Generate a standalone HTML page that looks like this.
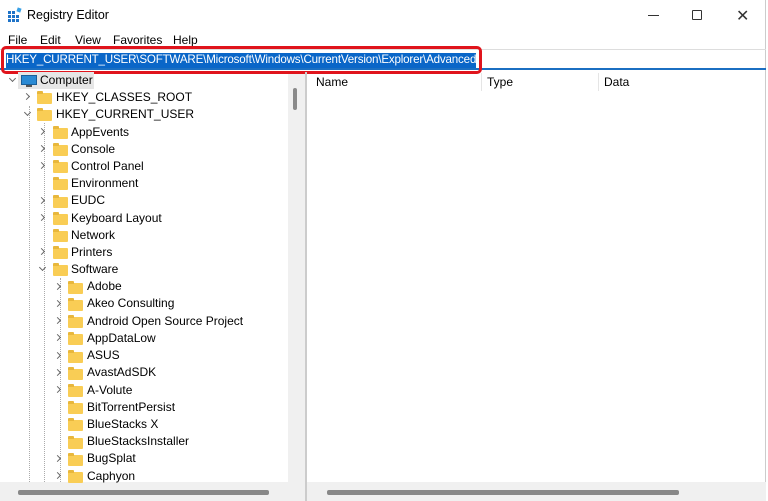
<!DOCTYPE html>
<html><head><style>
*{margin:0;padding:0;box-sizing:border-box}
body{width:768px;height:501px;background:#fff;font-family:"Liberation Sans",sans-serif;font-size:12px;color:#000;position:relative;overflow:hidden}
.a{position:absolute;white-space:nowrap}
.f{position:absolute;width:15px;height:11px;background:#f9cd55;border-radius:1px}
.f:before{content:"";position:absolute;left:0;top:-2px;width:6px;height:3px;background:#e8b73c;border-radius:1px 1px 0 0}
.c{position:absolute;width:5px;height:5px;border-right:1px solid #666;border-bottom:1px solid #666}
.r{transform:rotate(-45deg)}
.d{transform:rotate(45deg)}
.t{font-size:11.6px}
</style></head><body>
<div class="a" style="left:0;top:0;width:766px;height:501px;border-right:1px solid #ccc;background:#fff"></div>
<svg class="a" style="left:8px;top:7px" width="15" height="15" viewBox="0 0 15 15"><g fill="#1e73c8"><rect x="0" y="4" width="3" height="3"/><rect x="4" y="4" width="3" height="3"/><rect x="0" y="8" width="3" height="3"/><rect x="4" y="8" width="3" height="3"/><rect x="8" y="8" width="3" height="3"/><rect x="0" y="12" width="3" height="3"/><rect x="4" y="12" width="3" height="3"/><rect x="8" y="12" width="3" height="3"/></g><rect x="9" y="1" width="4" height="4" fill="#37a0e6" transform="rotate(20 11 3)"/></svg>
<div class="a" style="left:27px;top:8px;font-size:12.5px">Registry Editor</div>
<div class="a" style="left:648px;top:15px;width:11px;height:1px;background:#333"></div>
<div class="a" style="left:692px;top:10px;width:10px;height:10px;border:1px solid #333;border-radius:1px"></div>
<div class="a" style="left:736px;top:6px;font-size:16px;color:#333">✕</div>
<div class="a" style="left:8px;top:33px">File</div>
<div class="a" style="left:40px;top:33px">Edit</div>
<div class="a" style="left:75px;top:33px">View</div>
<div class="a" style="left:113px;top:33px">Favorites</div>
<div class="a" style="left:173px;top:33px">Help</div>
<div class="a" style="left:0;top:49px;width:766px;height:1px;background:#ddd"></div>
<div class="a" style="left:0;top:68px;width:766px;height:2px;background:#1b6fc2"></div>
<div class="a" style="left:6px;top:53px;width:470px;height:15px;background:#0a66c8"></div>
<div class="a t" style="left:6px;top:53px;color:#fff;letter-spacing:-0.18px">HKEY_CURRENT_USER\SOFTWARE\Microsoft\Windows\CurrentVersion\Explorer\Advanced</div>
<div class="a" style="left:1px;top:46px;width:481px;height:28px;border:3px solid #e0141c;border-radius:5px"></div>
<div class="a" style="left:288px;top:74px;width:17px;height:408px;background:#f0f0f0"></div>
<div class="a" style="left:293px;top:88px;width:4px;height:22px;background:#8a8a8a;border-radius:2px"></div>
<div class="a" style="left:305px;top:72px;width:2px;height:429px;background:#ccc"></div>
<div class="a" style="left:0;top:482px;width:305px;height:19px;background:#f0f0f0"></div>
<div class="a" style="left:18px;top:490px;width:251px;height:5px;background:#888;border-radius:2px"></div>
<div class="a" style="left:307px;top:482px;width:459px;height:19px;background:#f0f0f0"></div>
<div class="a" style="left:327px;top:490px;width:352px;height:5px;background:#888;border-radius:2px"></div>
<div class="a" style="left:316px;top:75px">Name</div>
<div class="a" style="left:481px;top:73px;width:1px;height:18px;background:#e5e5e5"></div>
<div class="a" style="left:487px;top:75px">Type</div>
<div class="a" style="left:598px;top:73px;width:1px;height:18px;background:#e5e5e5"></div>
<div class="a" style="left:604px;top:75px">Data</div>
<div class="a" style="left:29px;top:106px;width:0;height:376px;border-left:1px dotted #aaa"></div>
<div class="a" style="left:44px;top:123px;width:0;height:359px;border-left:1px dotted #aaa"></div>
<div class="a" style="left:60px;top:278px;width:0;height:204px;border-left:1px dotted #aaa"></div>
<div class="a" style="left:18px;top:72px;width:76px;height:17px;background:#e6e6e6"></div>
<div class="c d" style="left:10px;top:76px"></div>
<div class="a" style="left:21px;top:75px;width:16px;height:10px;background:#2a8ad4;border:1px solid #1a5f99"></div>
<div class="a" style="left:26px;top:85px;width:6px;height:2px;background:#555"></div>
<div class="a" style="left:40px;top:73px">Computer</div>

<div class="c r" style="left:24px;top:94px"></div><div class="f" style="left:37px;top:93px"></div><div class="a" style="left:56px;top:90px">HKEY_CLASSES_ROOT</div>
<div class="c d" style="left:25px;top:110px"></div><div class="f" style="left:37px;top:110px"></div><div class="a" style="left:56px;top:107px">HKEY_CURRENT_USER</div>

<div class="c r" style="left:39px;top:129px"></div><div class="f" style="left:53px;top:128px"></div><div class="a" style="left:71px;top:125px">AppEvents</div>
<div class="c r" style="left:39px;top:146px"></div><div class="f" style="left:53px;top:145px"></div><div class="a" style="left:71px;top:142px">Console</div>
<div class="c r" style="left:39px;top:163px"></div><div class="f" style="left:53px;top:162px"></div><div class="a" style="left:71px;top:159px">Control Panel</div>
<div class="f" style="left:53px;top:179px"></div><div class="a" style="left:71px;top:176px">Environment</div>
<div class="c r" style="left:39px;top:198px"></div><div class="f" style="left:53px;top:197px"></div><div class="a" style="left:71px;top:193px">EUDC</div>
<div class="c r" style="left:39px;top:215px"></div><div class="f" style="left:53px;top:214px"></div><div class="a" style="left:71px;top:211px">Keyboard Layout</div>
<div class="f" style="left:53px;top:231px"></div><div class="a" style="left:71px;top:228px">Network</div>
<div class="c r" style="left:39px;top:249px"></div><div class="f" style="left:53px;top:248px"></div><div class="a" style="left:71px;top:245px">Printers</div>
<div class="c d" style="left:40px;top:265px"></div><div class="f" style="left:53px;top:265px"></div><div class="a" style="left:71px;top:262px">Software</div>

<div class="c r" style="left:55px;top:284px"></div><div class="f" style="left:68px;top:283px"></div><div class="a" style="left:87px;top:279px">Adobe</div>
<div class="c r" style="left:55px;top:301px"></div><div class="f" style="left:68px;top:300px"></div><div class="a" style="left:87px;top:296px">Akeo Consulting</div>
<div class="c r" style="left:55px;top:318px"></div><div class="f" style="left:68px;top:317px"></div><div class="a" style="left:87px;top:314px">Android Open Source Project</div>
<div class="c r" style="left:55px;top:335px"></div><div class="f" style="left:68px;top:334px"></div><div class="a" style="left:87px;top:331px">AppDataLow</div>
<div class="c r" style="left:55px;top:353px"></div><div class="f" style="left:68px;top:352px"></div><div class="a" style="left:87px;top:348px">ASUS</div>
<div class="c r" style="left:55px;top:370px"></div><div class="f" style="left:68px;top:369px"></div><div class="a" style="left:87px;top:365px">AvastAdSDK</div>
<div class="c r" style="left:55px;top:387px"></div><div class="f" style="left:68px;top:386px"></div><div class="a" style="left:87px;top:383px">A-Volute</div>
<div class="f" style="left:68px;top:403px"></div><div class="a" style="left:87px;top:400px">BitTorrentPersist</div>
<div class="f" style="left:68px;top:420px"></div><div class="a" style="left:87px;top:417px">BlueStacks X</div>
<div class="f" style="left:68px;top:438px"></div><div class="a" style="left:87px;top:434px">BlueStacksInstaller</div>
<div class="c r" style="left:55px;top:456px"></div><div class="f" style="left:68px;top:455px"></div><div class="a" style="left:87px;top:451px">BugSplat</div>
<div class="c r" style="left:55px;top:473px"></div><div class="f" style="left:68px;top:472px"></div><div class="a" style="left:87px;top:469px">Caphyon</div>
</body></html>
